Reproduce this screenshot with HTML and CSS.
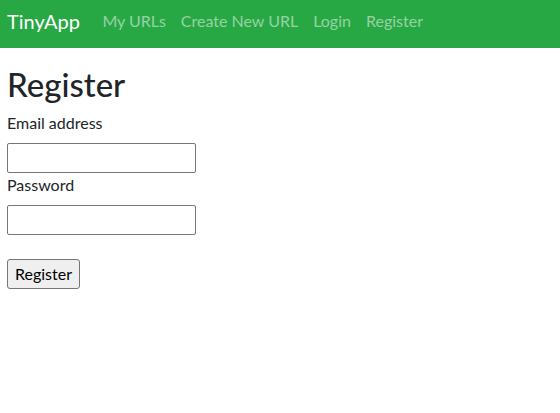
FILE: index.html
```html
<!DOCTYPE html>
<html lang="en">
<head>
    <meta charset="UTF-8">
    <title>TinyApp - Register</title>
    <link rel="stylesheet" href="styles.css">
</head>
<body>

<nav class="navbar">
    <a class="navbar-brand" href="#">TinyApp</a>
    <div class="nav-links">
        <a class="nav-link" href="#">My URLs</a>
        <a class="nav-link" href="#">Create New URL</a>
        <a class="nav-link" href="#">Login</a>
        <a class="nav-link" href="#">Register</a>
    </div>
</nav>

<main class="content">
    <h1>Register</h1>
    <form class="register-form">
        <label for="email">Email address</label>
        <input type="email" id="email" name="email">

        <label for="password">Password</label>
        <input type="password" id="password" name="password">

        <button type="submit" class="submit-btn">Register</button>
    </form>
</main>

</body>
</html>
```
FILE: styles.css
```css
body {
    font-family: 'Lato', 'Liberation Sans', sans-serif;
    margin: 0;
    padding: 0;
    background: #fff;
    color: #212529;
    font-size: 16px;
    line-height: 24px;
}
.navbar {
    display: flex;
    align-items: flex-start;
    height: 48px;
    padding: 0 7px;
    background-color: #28a745;
}
.navbar a {
    text-decoration: none;
}
.navbar-brand {
    padding-top: 6px;
    margin-right: 15px;
    font-size: 20px;
    line-height: 30px;
    color: #fff;
}
.nav-links {
    display: flex;
}
.nav-link {
    padding: 9px 7.5px 0;
    line-height: 24px;
    color: rgba(255, 255, 255, 0.5);
}
.content {
    padding: 0 7px;
}
h1 {
    margin: 16px 0 7px;
    font-size: 33px;
    line-height: 40px;
    font-weight: 500;
}
.register-form label {
    display: block;
    margin-bottom: 8px;
}
.register-form input {
    display: block;
    box-sizing: border-box;
    width: 189px;
    height: 30px;
    margin: 0;
    padding: 1px 2px;
    border: 1px solid #767676;
    border-radius: 2px;
    font: inherit;
}
.submit-btn {
    display: block;
    box-sizing: border-box;
    height: 30px;
    margin-top: 24px;
    padding: 0 7px;
    border: 1px solid #767676;
    border-radius: 3px;
    background-color: #efefef;
    color: #000;
    font: inherit;
}
```
